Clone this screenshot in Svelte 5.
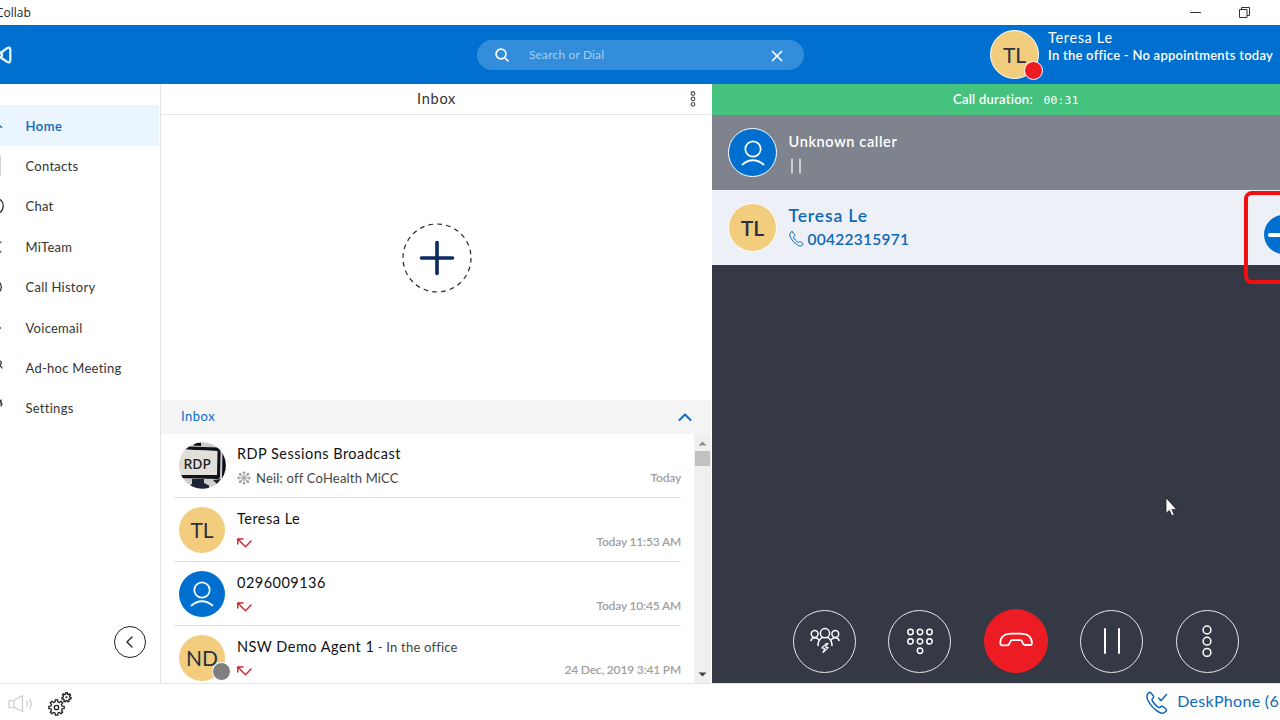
<script lang="ts">
	type Avatar = 'rdp' | 'person' | 'initials'

	interface Row {
		avatar: Avatar
		initials?: string
		offline?: boolean
		name: string
		status?: string
		message?: string
		time: string
	}

	const nav = [
		{ label: 'Home', icon: 'M-4 3 L-2 -2 L1.600 1.500' },
		{ label: 'Contacts', icon: 'M0 -10 V9', faint: true },
		{ label: 'Chat', icon: 'M-1 -7 Q3.200 -5 3.200 0 T-1 7' },
		{ label: 'MiTeam', icon: 'M-1 -4 L1 -5 M-1 4 L1 5' },
		{ label: 'Call History', icon: 'M-1 -5 Q1.300 -3 1.300 0 T-1 5' },
		{ label: 'Voicemail', icon: 'M-1 0 H0.500' },
		{ label: 'Ad-hoc Meeting', icon: 'M-1 -7 Q2 -7 1 -4 L-1 -3 M0 -3 L2 0' },
		{ label: 'Settings', icon: 'M-1 -5 L1 -8 V-4 H2 L1 -2' }
	]

	const rows: Row[] = [
		{ avatar: 'rdp', name: 'RDP Sessions Broadcast', message: 'Neil: off CoHealth MiCC', time: 'Today' },
		{ avatar: 'initials', initials: 'TL', name: 'Teresa Le', time: 'Today 11:53 AM' },
		{ avatar: 'person', name: '0296009136', time: 'Today 10:45 AM' },
		{ avatar: 'initials', initials: 'ND', offline: true, name: 'NSW Demo Agent 1', status: 'In the office', time: '24 Dec, 2019 3:41 PM' }
	]

	const keypad = [[-9.500, -9], [0, -9], [9.500, -9], [-9.500, 0.400], [0, 0.400], [9.500, 0.400], [0, 9.800]]

	// outline of a cog with bevelled teeth
	function cog(teeth: number, outer: number, inner: number) {
		const pts: string[] = []
		for (let i = 0; i < teeth; i++) {
			for (const [off, r] of [[-0.3, inner], [-0.2, outer], [0.2, outer], [0.3, inner]]) {
				const a = ((i + off) / teeth) * Math.PI * 2
				pts.push(`${(Math.sin(a) * r).toFixed(2)},${(-Math.cos(a) * r).toFixed(2)}`)
			}
		}
		return pts.join(' ')
	}
</script>

{#snippet person()}
	<svg class="person" viewBox="-12 -14 24 28" width="24" height="28">
		<circle cy="-4" r="7.700" />
		<path d="M-10.500 11.500 Q0 3 10.500 11.500" />
	</svg>
{/snippet}

<div class="app">
	<div class="titlebar">
		<span class="title">Collab</span>
		<svg class="winbtns" viewBox="0 0 70 14" width="70" height="14">
			<path d="M0 7.500 H11" />
			<path d="M49.500 4.500 h7.500 v8 h-7.500 z M51.500 4.500 v-2 h8 v8 h-2.500" />
		</svg>
	</div>

	<header>
		<svg class="logo" viewBox="0 0 14 20" width="14" height="20">
			<path d="M0 8.500 L7 3.200 Q10.300 1.300 10.300 5 V15 Q10.300 18.700 7 16.800 L0 12" />
			<circle cx="-0.500" cy="10" r="2.500" />
		</svg>
		<div class="search">
			<svg viewBox="0 0 14 14" width="14" height="14">
				<circle cx="6" cy="6" r="4.900" />
				<path d="M9.500 9.500 L13 13" />
			</svg>
			<span>Search or Dial</span>
			<svg class="clear" viewBox="0 0 14 14" width="14" height="14">
				<path d="M2.500 2.500 L11.500 11.500 M11.500 2.500 L2.500 11.500" />
			</svg>
		</div>
		<div class="me">
			<div class="avatar ring big">TL<i class="dot busy"></i></div>
			<div class="me-text">
				<div class="me-name">Teresa Le</div>
				<div class="me-status">In the office - No appointments today</div>
			</div>
		</div>
	</header>

	<main>
		<nav>
			{#each nav as item, i}
				<div class="item" class:active={i === 0}>
					<svg class:faint={item.faint} viewBox="0 -12 8 24" width="8" height="24"><path d={item.icon} /></svg>
					<span>{item.label}</span>
				</div>
			{/each}
			<div class="collapse">
				<svg viewBox="0 0 12 12" width="12" height="12"><path d="M8 1 L3 6 L8 11" /></svg>
			</div>
		</nav>

		<section class="inbox">
			<div class="head">
				<span>Inbox</span>
				<svg viewBox="0 0 6 16" width="6" height="16">
					{#each [2.500, 7.900, 13.300] as cy}<circle cx="3" {cy} r="1.800" />{/each}
				</svg>
			</div>
			<div class="favourites">
				<svg viewBox="-36 -36 72 72" width="72" height="72">
					<circle r="34" />
					<path d="M-15.500 0 H15.500 M0 -15.500 V15.500" />
				</svg>
			</div>
			<div class="group">
				<span>Inbox</span>
				<svg viewBox="0 0 14 10" width="14" height="10"><path d="M1.500 8 L7 2.500 L12.500 8" /></svg>
			</div>
			<div class="scroller">
				<div class="list">
					{#each rows as row}
						<div class="row">
							{#if row.avatar === 'rdp'}
								<svg class="rdp" viewBox="0 0 47 47" width="47" height="47">
									<clipPath id="round"><circle cx="23.500" cy="23.500" r="23.300" /></clipPath>
									<g clip-path="url(#round)">
										<rect width="47" height="47" fill="#cfccca" />
										<path d="M14 3.500 L17 1 L22 0.500 V4 Z" fill="#111" />
										<path d="M43.500 9 L47 13 V33 L43 37 Z" fill="#0d0f18" />
										<path d="M8 4.500 L40 5.500 Q42 6 41.600 9 L41 35 Q41 37 39 37 L0 36 V33 H36 L38 9 L5 7.500 Z" fill="#10131c" />
										<path d="M5 7.500 L38.500 9 L38 33 H0 V15 Z" fill="#e2dfda" />
										<path d="M13 37 H25 V41 L30 43.500 V47 H10 V44 L13 42 Z" fill="#1d2435" />
										<path d="M34 38 L42 37 L38 42 Z" fill="#1d2435" />
										<text x="4.500" y="26.500">RDP</text>
									</g>
								</svg>
							{:else if row.avatar === 'person'}
								<div class="avatar blue">{@render person()}</div>
							{:else}
								<div class="avatar">{row.initials}{#if row.offline}<i class="dot off"></i>{/if}</div>
							{/if}
							<div class="body">
								<div class="name">{row.name}{#if row.status}<small>{` - ${row.status}`}</small>{/if}</div>
								<div class="detail">
									{#if row.message}
										<svg class="flake" viewBox="-7 -7 14 14" width="14" height="14">
											{#each [0, 45, 90, 135, 180, 225, 270, 315] as a}
												<g transform="rotate({a})"><path d="M0 0 V-4.600" /><circle cy="-5.400" r="0.900" /></g>
											{/each}
										</svg>
										<span class="message">{row.message}</span>
									{:else}
										<svg class="missed" viewBox="0 0 15 10" width="15" height="10"><path d="M0.700 6 V1 H6 M1 1.200 L8.500 8.700 L14 3" /></svg>
									{/if}
									<time>{row.time}</time>
								</div>
							</div>
						</div>
					{/each}
				</div>
				<div class="scrollbar">
					<svg viewBox="0 0 9 5" width="9" height="5"><path d="M0.500 4.500 L4.500 0.500 L8.500 4.500 Z" fill="#8d8d8d" /></svg>
					<div class="thumb"></div>
					<svg viewBox="0 0 9 5" width="9" height="5"><path d="M0.500 0.500 H8.500 L4.500 4.500 Z" fill="#444" /></svg>
				</div>
			</div>
		</section>

		<section class="call">
			<div class="duration">Call duration: <span>00:31</span></div>
			<div class="party held">
				<div class="avatar blue ring big">{@render person()}</div>
				<div>
					<div class="held-name">Unknown caller</div>
					<svg class="bars" viewBox="0 0 12 16" width="12" height="16"><path d="M3 1 V15 M11 1 V15" /></svg>
				</div>
			</div>
			<div class="party current">
				<div class="avatar bold pale big">TL</div>
				<div>
					<div class="cur-name">Teresa Le</div>
					<div class="cur-num">
						<svg viewBox="0 0 15 16" width="15" height="16">
							<path d="M3.400 0.800 L5.600 3.600 Q6 4.400 5.200 5.200 Q4.200 6 4.800 6.900 Q6.600 9.600 8.600 11.100 Q9.500 11.600 10.300 10.900 Q11 10.200 11.800 10.800 L13.800 12.500 Q14.400 13.200 13.600 14 Q12 15.800 9.600 14.700 Q4 11.800 1.100 5.800 Q0.100 3 1.700 1.400 Q2.700 0.200 3.400 0.800 Z" />
						</svg>
						<span>00422315971</span>
					</div>
				</div>
				<div class="merge"><i></i></div>
				<div class="highlight"></div>
			</div>
			<div class="stage">
				<svg class="cursor" viewBox="0 0 12 20" width="12" height="20">
					<path d="M1 1 V16.500 L4.400 13.300 L6.800 18.800 L9.200 17.700 L6.900 12.400 H11.400 Z" />
				</svg>
			</div>
			<div class="controls">
				<div class="round">
					<svg viewBox="-16 -16 32 32" width="32" height="32">
						<circle cy="-7.800" r="4.600" />
						<circle cx="-10.300" cy="-7" r="3.400" />
						<circle cx="10.300" cy="-7" r="3.400" />
						<path d="M-14 -0.500 Q-13.500 -3 -10.300 -3.200 Q-7.500 -3.300 -6 -1 M14 -0.500 Q13.500 -3 10.300 -3.200 Q7.500 -3.300 6 -1 M-7 4.500 Q-6.800 -1.500 -2.800 -3.400 M7 4.500 Q6.800 -1.500 2.800 -3.400" />
						<path class="fine" d="M1.500 2.500 L-3.200 7 L-0.300 7.500 L-2 11.500 L3.200 6.600 L0.500 6 L3 2.500 Z" />
					</svg>
				</div>
				<div class="round">
					<svg viewBox="-16 -16 32 32" width="32" height="32">
						{#each keypad as [cx, cy]}<circle {cx} {cy} r="2.700" />{/each}
					</svg>
				</div>
				<div class="round hangup">
					<svg viewBox="-18 -10 36 20" width="36" height="20">
						<path d="M-15.700 2.300 C-16 -4 -12 -7.300 -4 -7.300 H4 C12 -7.300 16 -4 15.900 2.300 Q16 4 14 4 H9 Q7.200 4 6.700 2 L6.200 0.500 Q5.700 -0.800 4 -0.800 H-3.500 Q-5.200 -0.800 -5.700 0.500 L-6.600 2.600 Q-7.200 4.300 -9 4.300 H-13.800 Q-15.600 4.300 -15.700 2.300 Z" />
					</svg>
				</div>
				<div class="round">
					<svg class="pause" viewBox="-16 -16 32 32" width="32" height="32"><path d="M-7 -12 V12 M7 -12 V12" /></svg>
				</div>
				<div class="round">
					<svg viewBox="-16 -16 32 32" width="32" height="32">
						{#each [-11, 0.200, 11.400] as cy}<circle {cy} r="3.900" />{/each}
					</svg>
				</div>
			</div>
		</section>
	</main>

	<footer>
		<svg class="speaker" viewBox="0 0 26 20" width="26" height="20">
			<path d="M1 6.500 H6 L14.500 1.500 V17.500 L6 13.500 H1 Z M6 6.500 V13.500 M18.500 7 Q20.500 9.500 18.500 12.500 M21.500 5.500 Q25 9.500 21.500 14.500" />
		</svg>
		<svg class="cogs" viewBox="0 0 28 26" width="28" height="26">
			<g transform="translate(10.500 16.500)"><polygon points={cog(8, 7.8, 5.8)} /><circle r="2.200" /></g>
			<g transform="translate(20.500 6.300)"><polygon points={cog(7, 4.700, 3.300)} /><circle r="0.400" /></g>
		</svg>
		<div class="phone">
			<svg viewBox="0 0 22 24" width="22" height="24">
				<path d="M4.500 1.500 L7.500 5 Q8 6.300 6.800 7.300 Q5.500 8.500 6.500 10 Q9 14 12.300 16.300 Q13.500 17 14.500 15.900 Q15.700 14.700 17 15.700 L20 18 Q21 19 20 20.300 Q17.500 23.300 13.500 21.500 Q5.500 17 1.500 8.500 Q0 4.500 2.300 2 Q3.600 0.700 4.500 1.500 Z" />
				<path d="M12.500 7 L15 9.500 L20.500 3.500" />
			</svg>
			<span>DeskPhone (6</span>
		</div>
	</footer>
</div>

<style>
	:global(body) {
		overflow: hidden;
	}

	.app {
		width: 1280px;
		height: 720px;
		display: flex;
		flex-direction: column;
		background: #fff;
		font-family: Lato, "Open Sans", sans-serif;
		font-size: 13px;
		color: #333;
		overflow: hidden;
		white-space: nowrap;
	}

	svg {
		display: block;
		flex: none;
		fill: none;
		stroke: currentColor;
		stroke-linecap: round;
		stroke-linejoin: round;
	}

	.titlebar {
		height: 25px;
		flex: none;
		display: flex;
		align-items: center;
		justify-content: space-between;
		font: 12px "Open Sans", sans-serif;
		color: #222;

		& .title { margin-left: -4px; }
	}

	.winbtns {
		margin: -1px 20px 0 0;
		stroke: #333;
		stroke-width: 1;
		stroke-linecap: butt;
	}

	header {
		height: 59px;
		flex: none;
		display: flex;
		align-items: center;
		background: #0070d0;
		color: #fff;
	}

	.logo {
		stroke-width: 2.3;
		color: #e4f4ff;
	}

	.search {
		width: 327px;
		height: 30px;
		box-sizing: border-box;
		margin-left: 462.5px;
		padding: 0 20px 0 18.5px;
		display: flex;
		align-items: center;
		border-radius: 15px;
		background: #338dda;

		& svg { stroke-width: 1.7; }
		& span {
			margin-left: 20px;
			flex: 1;
			font-size: 12px;
			letter-spacing: 0.15px;
			color: #a3cdf2;
		}
		& .clear { margin-top: 3px; }
	}

	.me {
		display: flex;
		margin-left: 186.5px;
	}

	.me-text { margin: -2px 0 0 9px; }
	.me-name {
		font-size: 14.5px;
		line-height: 19px;
		letter-spacing: 0.65px;
	}
	.me-status {
		font-size: 13px;
		line-height: 17px;
		font-weight: 600;
		letter-spacing: 0.25px;
	}

	.avatar {
		position: relative;
		width: 46px;
		height: 46px;
		flex: none;
		box-sizing: border-box;
		display: flex;
		align-items: center;
		justify-content: center;
		border-radius: 50%;
		background: #f1cd7d;
		color: #2a3040;
		font-size: 21px;

		&.big { width: 49px; height: 49px; }
		&.blue { background: #0070d0; color: #fff; }
		&.ring { border: 1.5px solid #fff; }
		&.pale { border: 1px solid #fff; }
		&.bold { font-weight: 600; }
	}

	.person { stroke-width: 1.7; }

	.dot {
		position: absolute;
		width: 17px;
		height: 17px;
		border-radius: 50%;
		border: 1.5px solid #fff;
	}
	.busy { right: -5px; bottom: -2px; background: #ed1c24; }
	.off { right: -6px; bottom: 0; background: #7f7f82; }

	main {
		height: 599px;
		flex: none;
		display: flex;
	}

	nav {
		width: 160px;
		flex: none;
		box-sizing: border-box;
		padding-top: 21.4px;
		display: flex;
		flex-direction: column;
	}

	.item {
		height: 40.4px;
		margin-right: 1px;
		display: flex;
		align-items: center;
		letter-spacing: 0.27px;
		stroke-width: 1.3;

		& span { margin-left: 17.5px; }
		& .faint { color: #bbb; }
		&.active {
			background: #ebf5fe;
			color: #0b68bb;
			font-weight: 600;
			letter-spacing: 0.5px;
		}
	}

	.collapse {
		width: 30px;
		height: 30px;
		margin: auto 14px 25px auto;
		display: flex;
		align-items: center;
		justify-content: center;
		border: 1.3px solid #222;
		border-radius: 50%;
		stroke-width: 1.5;
	}

	.inbox {
		width: 552px;
		flex: none;
		display: flex;
		flex-direction: column;
		box-sizing: border-box;
		padding-right: 1px;
		border-left: 1px solid #e4e4e4;
	}

	.head {
		height: 30px;
		display: flex;
		align-items: center;
		justify-content: flex-end;
		border-bottom: 1px solid #e6e6e6;
		font-size: 14.5px;

		& span {
			flex: 1;
			margin-top: -1px;
			padding-left: 22px;
			text-align: center;
			letter-spacing: 0.75px;
		}
		& svg { margin-right: 15px; color: #555; stroke-width: 1.2; }
	}

	.favourites {
		height: 285px;
		display: flex;
		align-items: center;
		justify-content: center;
		padding-left: 1px;

		& circle { stroke: #222; stroke-width: 1.2; stroke-dasharray: 4.7 4.2; stroke-linecap: butt; }
		& path { stroke: #0b2a5e; stroke-width: 3.6; }
	}

	.group {
		height: 34px;
		box-sizing: border-box;
		display: flex;
		align-items: center;
		justify-content: space-between;
		padding: 0 19px 1px 20px;
		background: #f4f4f4;
		color: #0b6cc9;
		letter-spacing: 0.5px;

		& span { margin-top: -1px; }
		& svg { stroke-width: 2; }
	}

	.scroller {
		flex: 1;
		display: flex;
		overflow: hidden;
	}

	.list {
		flex: 1;
		padding: 0 13px;
	}

	.row {
		height: 64px;
		box-sizing: border-box;
		display: flex;
		align-items: center;
		padding-left: 5px;
		border-bottom: 1.5px solid #e3e3e3;

		/* rows without a message sit a touch lower */
		&:not(:first-child) .name { padding-top: 1px; }
		&:not(:first-child) .detail { margin-top: 3px; }
	}

	.rdp {
		margin-right: -1px;
		stroke: none;

		& text {
			font: 500 14px "Noto Sans", sans-serif;
			fill: #222;
		}
	}

	.body {
		flex: 1;
		margin-left: 12px;
	}

	.name {
		font-size: 14.5px;
		line-height: 20px;
		letter-spacing: 0.48px;
		color: #111;

		& small {
			font-size: 13px;
			letter-spacing: 0.2px;
			color: #444;
			white-space: pre;
		}
	}

	.detail {
		height: 20px;
		margin-top: 4px;
		display: flex;
		align-items: center;
	}

	.flake { color: #999; }
	.message { margin-left: 5px; letter-spacing: 0.2px; color: #444; }
	.missed { color: #d8222f; stroke-width: 1.4; margin-top: 3px; }

	time {
		margin-left: auto;
		font-size: 12px;
		font-weight: 600;
		letter-spacing: -0.18px;
		color: #a0a0a0;
	}

	.scrollbar {
		width: 17px;
		display: flex;
		flex-direction: column;
		align-items: center;
		padding: 7px 0 6px;
		box-sizing: border-box;
		background: #f0f0f0;

		& svg { stroke: none; }
	}

	.thumb {
		width: 15px;
		height: 15px;
		margin: 5px 0 auto;
		background: #c1c1c1;
	}

	.call {
		flex: 1;
		min-width: 0;
		display: flex;
		flex-direction: column;
		background: #353945;
	}

	.duration {
		height: 31px;
		line-height: 31px;
		padding-left: 241px;
		background: #45c27d;
		color: #fff;
		font-weight: 600;
		letter-spacing: 0.25px;

		& span { margin-left: 7px; font: 11.3px "DejaVu Sans Mono", monospace; }
	}

	.party {
		position: relative;
		height: 75px;
		box-sizing: border-box;
		display: flex;
		align-items: center;
		gap: 11.5px;
		padding-left: 16px;
		background: #7f838e;
		color: #fff;

		&.current {
			padding-bottom: 1px;
			background: #edf1f7;
			color: #0f68b8;
		}
	}

	.held-name {
		font-size: 14.5px;
		line-height: 20px;
		font-weight: 600;
		letter-spacing: 0.63px;
	}
	.bars { margin-top: 6px; stroke-width: 1.2; }
	.cur-name {
		font-size: 17.5px;
		line-height: 23px;
		font-weight: 600;
		letter-spacing: 0.85px;
	}
	.cur-num {
		display: flex;
		align-items: center;
		gap: 4px;
		font-size: 15.5px;
		line-height: 24px;
		font-weight: 600;
		letter-spacing: 0.25px;
	}

	.merge {
		position: absolute;
		left: 552px;
		top: 25px;
		width: 39px;
		height: 39px;
		border-radius: 50%;
		background: #0070d0;

		& i {
			position: absolute;
			left: 4px;
			top: 18px;
			width: 30px;
			height: 4px;
			border-radius: 2px;
			background: #fff;
		}
	}

	.highlight {
		position: absolute;
		left: 532px;
		top: 1px;
		width: 60px;
		height: 85px;
		border: 4px solid #f10f12;
		border-radius: 8px;
	}

	.stage { flex: 1; }

	.cursor {
		margin: 232px 0 0 453px;
		fill: #fff;
		stroke: #222;
		stroke-width: 0.8;
	}

	.controls {
		display: flex;
		align-items: center;
		justify-content: space-between;
		padding: 0 41.5px 10px 81px;
		color: #fff;
	}

	.round {
		width: 63px;
		height: 63px;
		box-sizing: border-box;
		display: flex;
		align-items: center;
		justify-content: center;
		border: 1.3px solid #e6e8ee;
		border-radius: 50%;
		stroke-width: 1.5;

		& .fine { stroke-width: 1.1; }
		& .pause { stroke-width: 2; }
		&.hangup {
			width: 64px;
			height: 64px;
			background: #ed1c24;
			border-color: #ed1c24;
			stroke-width: 1.8;
		}
	}

	footer {
		flex: 1;
		display: flex;
		align-items: center;
		border-top: 1.5px solid #e5e5e5;
	}

	.speaker { margin: 3px 0 0 8px; color: #ccc; stroke-width: 1.2; }
	.cogs { margin: 3px 0 0 12px; stroke-width: 1.3; color: #222; }
	.phone {
		margin: 0 1px 2px auto;
		display: flex;
		align-items: center;
		gap: 9.5px;
		font-size: 16px;
		letter-spacing: 0.3px;
		color: #0f68b8;
		stroke-width: 1.5;

		& span { margin-top: -1px; }
		& svg { margin-top: 3px; }
	}
</style>
